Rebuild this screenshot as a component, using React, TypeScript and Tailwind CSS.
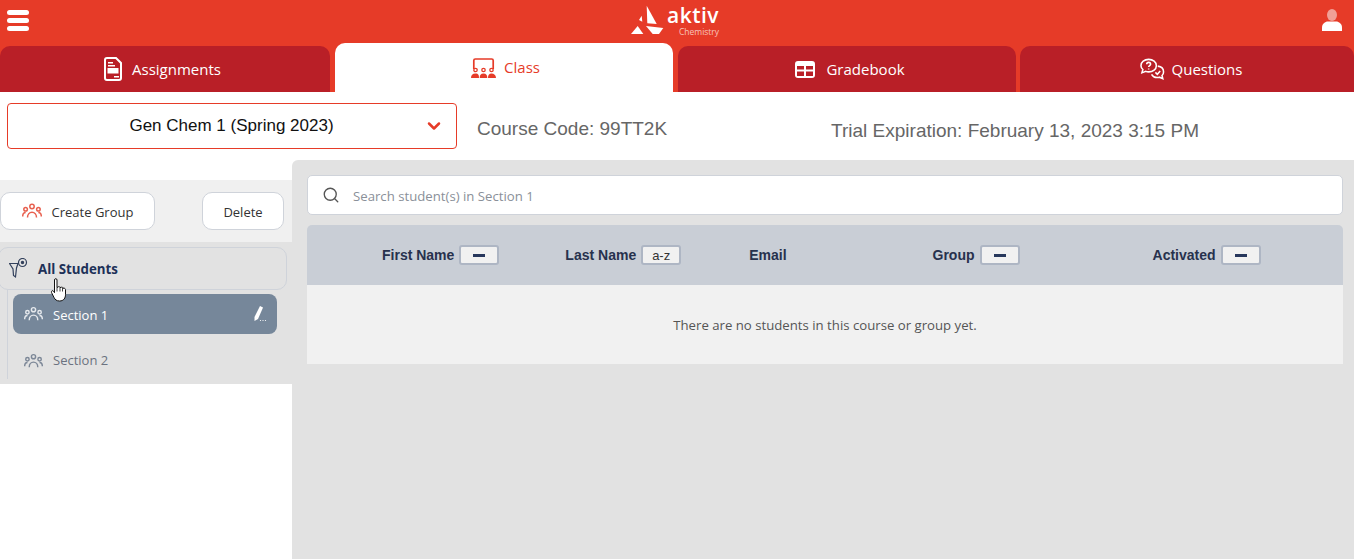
import React from 'react';
import { ChevronDown, Search } from 'lucide-react';

const GroupIcon = ({ className }: { className: string }) => (
  <svg viewBox="0 0 20 16" className={className} fill="none" stroke="currentColor" strokeWidth="1.500">
    <circle cx="10" cy="3.500" r="2.200" />
    <circle cx="3.600" cy="6.200" r="1.800" />
    <circle cx="16.400" cy="6.200" r="1.800" />
    <path d="M5.500 14.500c0-3.200 2-5.300 4.500-5.300s4.500 2.100 4.500 5.300" />
    <path d="M.7 13.500c0-2.500 1.200-3.900 3-3.900M19.300 13.500c0-2.500-1.200-3.900-3-3.900" />
  </svg>
);

const SortBtn = ({ label }: { label?: string }) => (
  <span className="ml-[5px] flex h-[20px] w-[40px] items-center justify-center rounded-[3px] border-2 border-[#aeb6c4] bg-[#f1f1f1]">
    {label ? (
      <span className="font-['Liberation_Sans',sans-serif] text-[13px] leading-none font-normal text-[#333]">{label}</span>
    ) : (
      <span className="h-[3px] w-3 bg-[#27375c]" />
    )}
  </span>
);

const Tab = ({ icon, label, className }: { icon: React.ReactNode; label: string; className: string }) => (
  <div className={`flex h-[46px] items-center justify-center rounded-t-[10px] bg-[#b91f27] text-[15px] text-white ${className}`}>
    {icon}
    <span>{label}</span>
  </div>
);

export default function App() {
  return (
    <div className="flex h-[559px] flex-col overflow-hidden bg-white font-['Open_Sans',sans-serif]">
      {/* Top bar */}
      <header className="relative flex h-[46px] shrink-0 items-center justify-between bg-[#e63b28] pr-[12px] pl-[7px]">
        <div className="-mt-[6px] flex flex-col gap-[3px]">
          <span className="h-[5px] w-[22px] rounded-full bg-white" />
          <span className="h-[5px] w-[22px] rounded-full bg-white" />
          <span className="h-[5px] w-[22px] rounded-full bg-white" />
        </div>
        <div className="absolute top-[4px] left-[630px] flex items-start gap-[3px] text-white">
          <svg viewBox="0 0 34 30" className="h-[30px] w-[34px]" fill="white">
            <path d="M16.700 1.700L26.700 20 17.300 19.300z" />
            <path d="M9 16l2.700-4.300.6 6z" />
            <path d="M1 30l6.700-8L13.300 30z" />
            <path d="M16 22l17.300 2L29 30h-6.300z" />
          </svg>
          <div className="flex flex-col items-end pt-[1px]">
            <span className="text-[21px] leading-[21px] font-semibold tracking-[.5px]">aktiv</span>
            <span className="mt-[1px] text-[8.500px] leading-[9px] text-[#f8c4bc]">Chemistry</span>
          </div>
        </div>
        <svg viewBox="0 0 20 22" className="-mt-[6px] h-[22px] w-[20px]">
          <ellipse cx="10" cy="6" rx="5" ry="6" fill="#f0a097" />
          <path d="M0 22v-3.500c0-3.500 3-6 6-6h8c3 0 6 2.500 6 6V22z" fill="white" />
        </svg>
      </header>

      {/* Tabs */}
      <nav className="relative -mt-[3px] flex h-[49px] shrink-0 items-end">
        <div className="absolute inset-x-0 bottom-0 h-[46px] bg-[#e63b28]" />
        <Tab
          className="relative w-[330px] gap-[10px] pr-[5px]"
          label="Assignments"
          icon={
            <svg viewBox="0 0 18 24" className="h-[24px] w-[18px]">
              <path d="M3 1h9l5 5v15a2 2 0 0 1-2 2H3a2 2 0 0 1-2-2V3a2 2 0 0 1 2-2z" fill="none" stroke="white" strokeWidth="2" />
              <path d="M4 5h5v1.500H4zM4 8h7v1.500H4zM3.500 11h11v5.500h-11zM10 19h5v1.500h-5z" fill="white" />
            </svg>
          }
        />
        <div className="relative ml-[5px] flex h-[49px] w-[338px] items-center justify-center gap-[8px] rounded-t-[10px] bg-white pl-[3px] text-[15px] text-[#e63b28]">
          <svg viewBox="0 0 25 20" className="h-[20px] w-[25px]" fill="#e63b28">
            <path d="M2.800 11V2.500A1.500 1.500 0 0 1 4.300 1h16.400A1.500 1.500 0 0 1 22.200 2.500V11" fill="none" stroke="#e63b28" strokeWidth="1.700" />
            <circle cx="4.500" cy="12" r="1.700" fill="none" stroke="#e63b28" strokeWidth="1.300" />
            <circle cx="12.500" cy="12" r="1.700" fill="none" stroke="#e63b28" strokeWidth="1.300" />
            <circle cx="20.500" cy="12" r="1.700" fill="none" stroke="#e63b28" strokeWidth="1.300" />
            <path d="M0 20c0-3 1.500-4.500 4.500-4.500S8 17 8 20zM8.700 20c0-3 1-4.500 3.800-4.500s3.800 1.500 3.800 4.500zM17 20c0-3 1-4.500 3.500-4.500S25 17 25 20z" />
          </svg>
          <span>Class</span>
        </div>
        <Tab
          className="relative ml-[5px] w-[338px] gap-[11px] pl-[6px]"
          label="Gradebook"
          icon={
            <svg viewBox="0 0 20 17" className="h-[17px] w-[20px]" fill="white">
              <path fillRule="evenodd" d="M3 0h14a3 3 0 0 1 3 3v11a3 3 0 0 1-3 3H3a3 3 0 0 1-3-3V3a3 3 0 0 1 3-3zM2 5v3.500h7V5zm9 0v3.500h7V5zM2 10.500V15h7v-4.500zm9 0V15h7v-4.500z" />
            </svg>
          }
        />
        <Tab
          className="relative ml-[4px] flex-1 gap-[7px] pl-[8px]"
          label="Questions"
          icon={
            <svg viewBox="0 0 26 22" className="h-[22px] w-[25px]" fill="none" stroke="white" strokeWidth="1.600">
              <path d="M9 1c4.500 0 8 2.800 8 6.500S13.500 14 9 14c-1 0-2-.1-3-.5L2 15l1-3.500C1.800 10.500 1 9 1 7.500 1 3.800 4.500 1 9 1z" />
              <path d="M18.500 8c3.500.5 6 2.800 6 6 0 1.500-.6 2.800-1.600 3.800l.8 3.200-3.500-1.500c-3 .8-6.500 0-8.200-3" />
              <path d="M7 6c0-2.500 4-2.500 4 0 0 1.500-2 1.500-2 3M9 10.500v1" />
              <path d="M16 14.500l2 2 3-3.500" />
            </svg>
          }
        />
      </nav>

      {/* Course row */}
      <div className="flex h-[68px] shrink-0 items-center pl-[7px] font-['Liberation_Sans',sans-serif]">
        <div className="relative flex h-[46px] w-[450px] items-center justify-center rounded-[4px] border border-[#e63b28] pr-[1px] pb-[1px] text-[17px] text-[#111]">
          Gen Chem 1 (Spring 2023)
          <ChevronDown size={20} strokeWidth={3} className="absolute top-[12px] right-[12px] text-[#e63b28]" />
        </div>
        <span className="mt-[6px] ml-[20px] text-[19px] text-[#666]">Course Code: 99TT2K</span>
        <span className="mt-[10px] ml-[164px] text-[19px] text-[#666]">Trial Expiration: February 13, 2023 3:15 PM</span>
      </div>

      <div className="flex min-h-0 flex-1">
        {/* Sidebar */}
        <aside className="w-[292px] shrink-0 pt-[20px]">
          <div className="flex h-[62px] items-center justify-between bg-[#f0f0f0] pr-[8px]">
            <button className="flex h-[38px] w-[155px] items-center justify-center gap-[10px] rounded-[10px] border border-[#cfd3da] bg-white text-[13px] text-[#333]">
              <GroupIcon className="h-[16px] w-[20px] text-[#e8604f]" />
              <span className="pt-[4px]">Create Group</span>
            </button>
            <button className="h-[38px] w-[82px] rounded-[10px] border border-[#cfd3da] bg-white pt-[4px] text-[13px] text-[#333]">
              Delete
            </button>
          </div>
          <div className="relative h-[142px] bg-[#e2e2e2] pt-[5px]">
            <div className="-ml-[2px] flex h-[43px] w-[289px] items-center gap-[9px] rounded-[10px] border border-[#cfd3da] pl-[10px] text-[13.300px] font-bold text-[#1d3158]">
              <svg viewBox="0 0 20 22" className="h-[22px] w-[20px]" fill="none" stroke="#33415c" strokeWidth="1.200">
                <path d="M.5 5.500H9L7.500 10l-1 9-2-1.500L4 11z" />
                <circle cx="13.500" cy="4.500" r="4" />
                <circle cx="13.500" cy="4.500" r="1.100" fill="#33415c" />
              </svg>
              <span className="pt-[3px]">All Students</span>
            </div>
            <div className="ml-[7px] border-l border-[#cfd3da] pt-[4px]">
              <div className="ml-[5px] flex h-[40px] w-[264px] items-center rounded-[8px] bg-[#76879a] pr-[10px] pl-[11px] text-[13px] text-white">
                <GroupIcon className="mr-[10px] h-[16px] w-[19px] text-[#e6e9ed]" />
                <span className="pt-[3px]">Section 1</span>
                <svg viewBox="0 0 14 16" className="ml-auto h-[16px] w-[14px]" fill="white">
                  <path d="M7 0l3 1.500L5 13l-3.500 2L1.500 11z" />
                  <circle cx="7.500" cy="14.500" r=".6" />
                  <circle cx="10" cy="14.500" r=".6" />
                  <circle cx="12.500" cy="14.500" r=".6" />
                </svg>
              </div>
              <div className="ml-[5px] flex h-[45px] items-center pt-[8px] pl-[11px] text-[13px] text-[#6b7280]">
                <GroupIcon className="mr-[10px] h-[16px] w-[19px] text-[#7c8797]" />
                Section 2
              </div>
            </div>
            {/* Mouse pointer from the capture */}
            <svg viewBox="0 0 16 24" className="absolute top-[36px] left-[51px] h-[24px] w-[16px]" fill="white" stroke="#111" strokeWidth="1">
              <path d="M3.500 2c0-1.800 2.500-1.800 2.500 0v7.500l1.500-.8c1-.2 1.500.3 1.500.8l1.500-.3c1-.1 1.500.4 1.500 1l1 0c.8 0 1.500.6 1.500 1.500v5c0 3-1.500 6.300-6 6.300-3 0-4.500-1.500-5.500-3.500L.5 14.500c-.5-1.500 1-2.500 2-1.300l1 1.500z" />
              <path d="M9 9.500v4M11.500 10v3.500M6 9.500v4" fill="none" strokeWidth=".8" />
            </svg>
          </div>
        </aside>

        {/* Main panel */}
        <main className="flex-1 rounded-tl-[6px] bg-[#e2e2e2] pt-[15px] pr-[11px] pl-[15px]">
          <div className="flex h-[40px] items-center rounded-[5px] border border-[#cfd3da] bg-white pl-[14px] text-[13.200px] text-[#8a9099]">
            <Search size={18} strokeWidth={1.8} className="mr-[13px] text-[#555]" />
            <span className="pt-[3px]">Search student(s) in Section 1</span>
          </div>
          <div className="mt-[10px] flex h-[60px] items-center rounded-t-[5px] bg-[#c9ced6] font-['Liberation_Sans',sans-serif] text-[14px] font-bold text-[#27314d]">
            <span className="ml-[75px] flex items-center">First Name<SortBtn /></span>
            <span className="ml-[66px] flex items-center">Last Name<SortBtn label="a-z" /></span>
            <span className="ml-[68px]">Email</span>
            <span className="ml-[146px] flex items-center">Group<SortBtn /></span>
            <span className="ml-[133px] flex items-center">Activated<SortBtn /></span>
          </div>
          <div className="flex h-[79px] items-center justify-center bg-[#f1f1f1] pt-[3px] text-[13.200px] text-[#555]">
            There are no students in this course or group yet.
          </div>
        </main>
      </div>
    </div>
  );
}
